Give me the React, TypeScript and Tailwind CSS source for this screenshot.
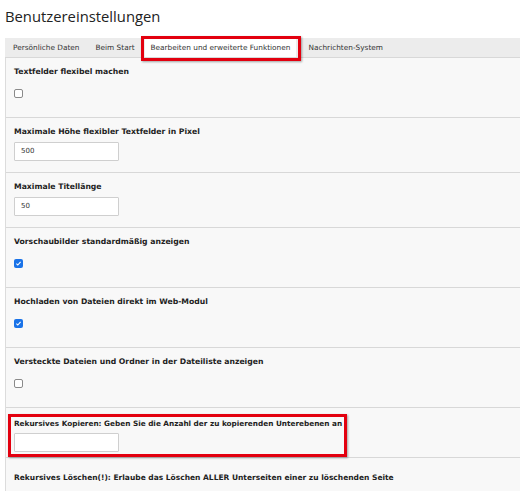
import React from "react";

type Field =
  | { key: string; label: string; type: "checkbox"; checked: boolean }
  | { key: string; label: string; type: "text"; value: string };

const fields: Field[] = [
  { key: "flex", label: "Textfelder flexibel machen", type: "checkbox", checked: false },
  { key: "maxh", label: "Maximale Höhe flexibler Textfelder in Pixel", type: "text", value: "500" },
  { key: "title", label: "Maximale Titellänge", type: "text", value: "50" },
  { key: "thumbs", label: "Vorschaubilder standardmäßig anzeigen", type: "checkbox", checked: true },
  { key: "upload", label: "Hochladen von Dateien direkt im Web-Modul", type: "checkbox", checked: true },
  { key: "hidden", label: "Versteckte Dateien und Ordner in der Dateiliste anzeigen", type: "checkbox", checked: false },
];

const tabs = ["Persönliche Daten", "Beim Start", "Bearbeiten und erweiterte Funktionen", "Nachrichten-System"];

function Checkbox({ checked }: { checked: boolean }) {
  return checked ? (
    <span className="flex items-center justify-center w-[9px] h-[9px] rounded-[2px] bg-[#1a73e8]">
      <svg viewBox="0 0 10 10" className="w-[7px] h-[7px]">
        <path d="M2 5.2 L4 7.2 L8 2.6" fill="none" stroke="white" strokeWidth="1.6" />
      </svg>
    </span>
  ) : (
    <span className="block w-[9px] h-[9px] rounded-[2px] border border-[#8a8a8a] bg-white" />
  );
}

function TextInput({ value }: { value: string }) {
  return (
    <div className="w-[105px] h-[19px] bg-white border border-[#cfcfcf] rounded-[1px] px-[6px] flex items-center text-[7px] text-[#333]">
      {value}
    </div>
  );
}

export default function App() {
  return (
    <div className="w-[520px] h-[491px] bg-white overflow-hidden font-['DejaVu_Sans',sans-serif] text-[#333]">
      <h1 className="pl-[5px] pt-[5px] h-[38px] text-[14.8px] leading-[22px] font-['Open_Sans',sans-serif] text-[#222]">
        Benutzereinstellungen
      </h1>

      {/* tab bar */}
      <div className="ml-[5px] h-[20px] bg-[#ececec] border-b border-[#d8d8d8] flex items-stretch text-[7.35px]">
        {tabs.map((t, i) =>
          i === 2 ? (
            <div key={t} className="relative bg-white px-[6px] ml-[2px] mr-[4px] flex items-center">
              <span>{t}</span>
              <span className="absolute -left-[4px] -top-[2px] -right-[5px] -bottom-[4px] border-[3px] border-[#e3000f] shadow-[1px_1px_2px_rgba(0,0,0,0.35)]" />
            </div>
          ) : (
            <div key={t} className="px-[8px] flex items-center">
              {t}
            </div>
          )
        )}
      </div>

      {/* content */}
      <div className="ml-[5px] bg-[#f8f8f8] border-l border-[#dcdcdc]">
        {fields.map((f) => (
          <div key={f.key} className="border-b border-[#d8d8d8] pl-[8px] pt-[9px]">
            <div className="text-[7.7px] leading-[10px] font-bold text-[#222] whitespace-nowrap">{f.label}</div>
            {f.type === "checkbox" ? (
              <div className="mt-[12px] pb-[19px]">
                <Checkbox checked={f.checked} />
              </div>
            ) : (
              <div className="mt-[5px] pb-[11px]">
                <TextInput value={f.value} />
              </div>
            )}
          </div>
        ))}

        <div className="border-b border-[#d8d8d8] pt-[6px] pl-[2px]">
          <div className="relative w-[339px] pl-[6px] pt-[5px] pb-[5px]">
            <div className="text-[7.3px] leading-[10px] font-bold text-[#222] whitespace-nowrap">
              Rekursives Kopieren: Geben Sie die Anzahl der zu kopierenden Unterebenen an
            </div>
            <div className="mt-[4px]">
              <TextInput value="" />
            </div>
            <span className="absolute inset-0 border-[3px] border-[#e3000f] shadow-[1px_1px_2px_rgba(0,0,0,0.35)]" />
          </div>
        </div>

        <div className="pl-[8px] pt-[15px] pb-[16px]">
          <div className="text-[7.5px] leading-[10px] font-bold text-[#222] whitespace-nowrap">
            Rekursives Löschen(!): Erlaube das Löschen ALLER Unterseiten einer zu löschenden Seite
          </div>
        </div>
      </div>
    </div>
  );
}
